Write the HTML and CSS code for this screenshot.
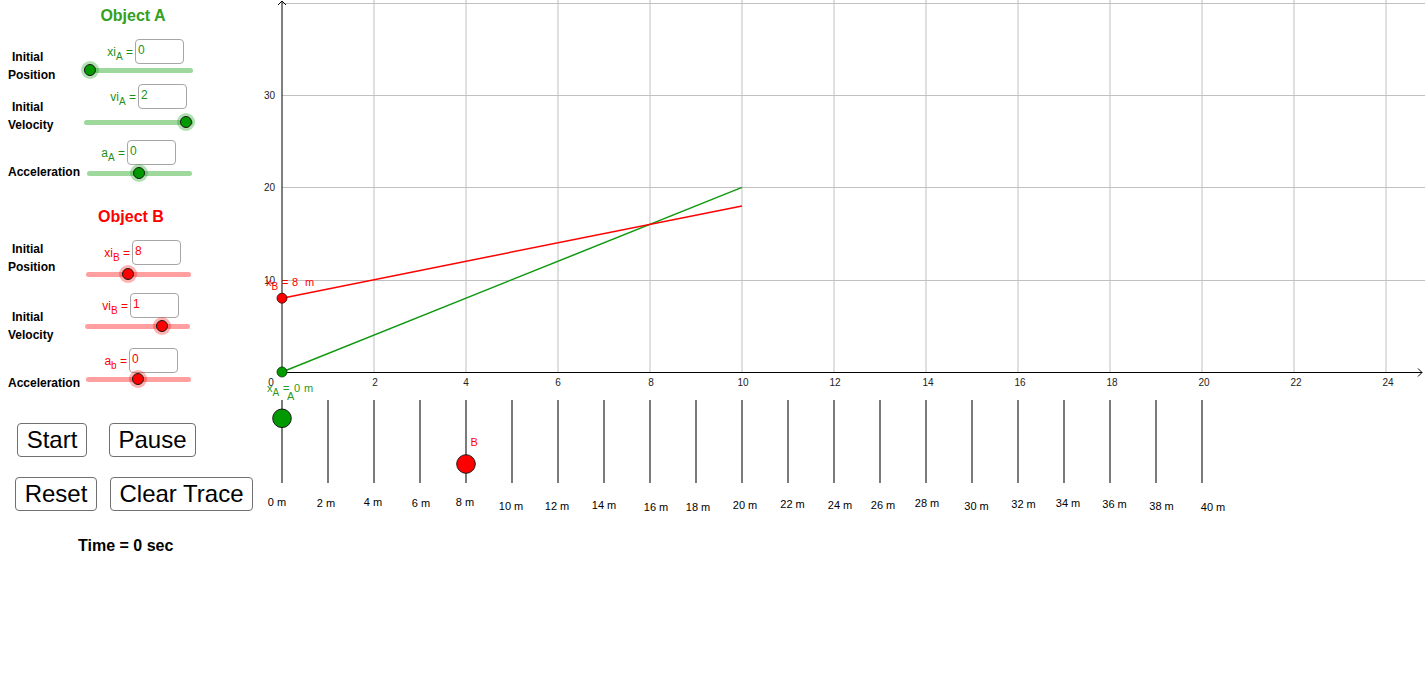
FILE: index.html
```html
<!DOCTYPE html>
<html>
<head>
<meta charset="utf-8">
<title>Motion</title>
<link rel="stylesheet" href="styles.css">
</head>
<body>
<div class="app">
  <div class="panel">
    <div class="title green t-a">Object A</div>

    <div class="row r-a1">
      <div class="rlabel"><span class="l1">Initial</span><span>Position</span></div>
      <div class="ctrl">
        <div class="field"><span class="var green">xi<sub>A</sub> =</span><span class="box green">0</span></div>
        <div class="slider sl-green"><span class="knob" style="left:6px"></span></div>
      </div>
    </div>

    <div class="row r-a2">
      <div class="rlabel"><span class="l1">Initial</span><span>Velocity</span></div>
      <div class="ctrl">
        <div class="field"><span class="var green">vi<sub>A</sub> =</span><span class="box green">2</span></div>
        <div class="slider sl-green"><span class="knob" style="left:102px"></span></div>
      </div>
    </div>

    <div class="row r-a3">
      <div class="rlabel"><span>Acceleration</span></div>
      <div class="ctrl">
        <div class="field"><span class="var green">a<sub>A</sub> =</span><span class="box green">0</span></div>
        <div class="slider sl-green"><span class="knob" style="left:52px"></span></div>
      </div>
    </div>

    <div class="title red t-b">Object B</div>

    <div class="row r-b1">
      <div class="rlabel"><span class="l1">Initial</span><span>Position</span></div>
      <div class="ctrl">
        <div class="field"><span class="var red">xi<sub>B</sub> =</span><span class="box red">8</span></div>
        <div class="slider sl-red"><span class="knob" style="left:42px"></span></div>
      </div>
    </div>

    <div class="row r-b2">
      <div class="rlabel"><span class="l1">Initial</span><span>Velocity</span></div>
      <div class="ctrl">
        <div class="field"><span class="var red">vi<sub>B</sub> =</span><span class="box red">1</span></div>
        <div class="slider sl-red"><span class="knob" style="left:77px"></span></div>
      </div>
    </div>

    <div class="row r-b3">
      <div class="rlabel"><span>Acceleration</span></div>
      <div class="ctrl">
        <div class="field"><span class="var red">a<sub>b</sub> =</span><span class="box red">0</span></div>
        <div class="slider sl-red"><span class="knob" style="left:52px"></span></div>
      </div>
    </div>

    <div class="btn-row br-1">
      <button class="btn b-start">Start</button>
      <button class="btn b-pause">Pause</button>
    </div>
    <div class="btn-row br-2">
      <button class="btn b-reset">Reset</button>
      <button class="btn b-clear">Clear Trace</button>
    </div>
    <div class="time">Time = 0 sec</div>
  </div>

  <svg class="graph" width="1169" height="695" viewBox="256 0 1169 695" xmlns="http://www.w3.org/2000/svg">
    <g class="grid">
      <line x1="374" y1="0" x2="374" y2="372"/>
      <line x1="466" y1="0" x2="466" y2="372"/>
      <line x1="558" y1="0" x2="558" y2="372"/>
      <line x1="650" y1="0" x2="650" y2="372"/>
      <line x1="742" y1="0" x2="742" y2="372"/>
      <line x1="834" y1="0" x2="834" y2="372"/>
      <line x1="926" y1="0" x2="926" y2="372"/>
      <line x1="1018" y1="0" x2="1018" y2="372"/>
      <line x1="1110" y1="0" x2="1110" y2="372"/>
      <line x1="1202" y1="0" x2="1202" y2="372"/>
      <line x1="1294" y1="0" x2="1294" y2="372"/>
      <line x1="1386" y1="0" x2="1386" y2="372"/>
      <line x1="282" y1="280.5" x2="1425" y2="280.5"/>
      <line x1="282" y1="187.5" x2="1425" y2="187.5"/>
      <line x1="282" y1="95.5" x2="1425" y2="95.5"/>
      <line x1="282" y1="3.5" x2="1425" y2="3.5"/>
    </g>
    <g class="axes">
      <line x1="282" y1="372.5" x2="1422" y2="372.5"/>
      <line x1="282" y1="372.5" x2="282" y2="1"/>
      <polyline points="1418,368.5 1422,372.5 1418,376.5"/>
      <polyline points="278,5 282,1 286,5"/>
    </g>
    <g class="ticks">
      <text x="271" y="386">0</text>
      <text x="375" y="386">2</text>
      <text x="466" y="386">4</text>
      <text x="558" y="386">6</text>
      <text x="651" y="386">8</text>
      <text x="743" y="386">10</text>
      <text x="835" y="386">12</text>
      <text x="928" y="386">14</text>
      <text x="1020" y="386">16</text>
      <text x="1112" y="386">18</text>
      <text x="1204" y="386">20</text>
      <text x="1296" y="386">22</text>
      <text x="1388" y="386">24</text>
    </g>
    <g class="yticks">
      <text x="275" y="99">30</text>
      <text x="275" y="191">20</text>
      <text x="275" y="284">10</text>
    </g>

    <line class="l-green" x1="282" y1="372" x2="742" y2="187.4"/>
    <line class="l-red" x1="282" y1="298.2" x2="742" y2="205.9"/>

    <text class="lbl red-t" x="266" y="286">x<tspan class="sub" dy="3.5">B</tspan></text>
    <text class="lbl red-t" x="282" y="286">=</text>
    <text class="lbl red-t" x="292" y="286">8</text>
    <text class="lbl red-t" x="305" y="286">m</text>

    <circle class="pt-red" cx="282" cy="298.2" r="5"/>
    <circle class="pt-green" cx="282" cy="372" r="5"/>

    <text class="lbl green-t" x="267" y="392">x<tspan class="sub" dy="3.5">A</tspan></text>
    <text class="lbl green-t" x="283" y="392">=</text>
    <text class="lbl green-t" x="294" y="392">0</text>
    <text class="lbl green-t" x="304" y="392">m</text>
    <text class="lbl green-t" x="287" y="399.5">A</text>

    <g class="track">
      <line x1="282" y1="400" x2="282" y2="483"/>
      <line x1="328" y1="400" x2="328" y2="483"/>
      <line x1="374" y1="400" x2="374" y2="483"/>
      <line x1="420" y1="400" x2="420" y2="483"/>
      <line x1="466" y1="400" x2="466" y2="483"/>
      <line x1="512" y1="400" x2="512" y2="483"/>
      <line x1="558" y1="400" x2="558" y2="483"/>
      <line x1="604" y1="400" x2="604" y2="483"/>
      <line x1="650" y1="400" x2="650" y2="483"/>
      <line x1="696" y1="400" x2="696" y2="483"/>
      <line x1="742" y1="400" x2="742" y2="483"/>
      <line x1="788" y1="400" x2="788" y2="483"/>
      <line x1="834" y1="400" x2="834" y2="483"/>
      <line x1="880" y1="400" x2="880" y2="483"/>
      <line x1="926" y1="400" x2="926" y2="483"/>
      <line x1="972" y1="400" x2="972" y2="483"/>
      <line x1="1018" y1="400" x2="1018" y2="483"/>
      <line x1="1064" y1="400" x2="1064" y2="483"/>
      <line x1="1110" y1="400" x2="1110" y2="483"/>
      <line x1="1156" y1="400" x2="1156" y2="483"/>
      <line x1="1202" y1="400" x2="1202" y2="483"/>
    </g>
    <g class="mlabels">
      <text x="277" y="505.5">0 m</text>
      <text x="326" y="507">2 m</text>
      <text x="373" y="506">4 m</text>
      <text x="421" y="507">6 m</text>
      <text x="465" y="506">8 m</text>
      <text x="511" y="509.5">10 m</text>
      <text x="557" y="509.5">12 m</text>
      <text x="604" y="509">14 m</text>
      <text x="656" y="510.5">16 m</text>
      <text x="698" y="510.5">18 m</text>
      <text x="745" y="509">20 m</text>
      <text x="792.5" y="508">22 m</text>
      <text x="840" y="508.5">24 m</text>
      <text x="883" y="508.5">26 m</text>
      <text x="927" y="507">28 m</text>
      <text x="976.5" y="509.5">30 m</text>
      <text x="1023.5" y="508">32 m</text>
      <text x="1068" y="506.5">34 m</text>
      <text x="1114.5" y="508">36 m</text>
      <text x="1161.5" y="510">38 m</text>
      <text x="1213" y="510.5">40 m</text>
    </g>

    <circle class="ball-green" cx="282" cy="418.3" r="9.3"/>
    <circle class="ball-red" cx="466" cy="464" r="9.3"/>
    <text class="lbl red-t" x="470.5" y="446">B</text>
  </svg>
</div>
</body>
</html>
```

FILE: styles.css
```css
html, body {
  margin: 0;
  padding: 0;
  background: #ffffff;
}

body {
  font-family: "Liberation Sans", Arial, sans-serif;
  color: #000;
}

.app {
  display: flex;
  width: 1425px;
  height: 695px;
  overflow: hidden;
}

.panel {
  width: 256px;
  flex: none;
}

.graph {
  flex: none;
  display: block;
}

.green { color: #1f8f1a; }
.red { color: #ff0000; }

.title {
  height: 32px;
  line-height: 32px;
  text-align: center;
  font-weight: bold;
  font-size: 16px;
}

.title.green { color: #33a01f; }

.t-a { padding-left: 10px; }
.t-b { padding-top: 22px; padding-left: 6px; }

.row {
  display: flex;
  align-items: flex-start;
}

.rlabel {
  width: 80px;
  flex: none;
  box-sizing: border-box;
  padding-left: 8px;
  display: flex;
  flex-direction: column;
  font-weight: bold;
  font-size: 12px;
  line-height: 18px;
  white-space: nowrap;
}

.rlabel .l1 { padding-left: 4px; }

.ctrl {
  display: flex;
  flex-direction: column;
  align-items: flex-start;
}

.field {
  display: flex;
  align-items: center;
}

.var {
  width: 42px;
  box-sizing: border-box;
  padding-right: 2px;
  text-align: right;
  font-size: 12px;
  white-space: nowrap;
}

.var sub {
  font-size: 10px;
  vertical-align: -4px;
  line-height: 0;
}

.box {
  width: 49px;
  height: 25px;
  box-sizing: border-box;
  border: 1px solid #a6a6a6;
  border-radius: 4px;
  font-size: 12px;
  line-height: 21px;
  padding-left: 2px;
  background: #fff;
}

.slider {
  position: relative;
  height: 12px;
}

.slider::before {
  content: "";
  position: absolute;
  left: 0;
  right: 0;
  top: 3.5px;
  height: 5px;
  border-radius: 3px;
}

.sl-green::before { background: #9fd89c; }
.sl-red::before { background: #ff9f9f; }

.knob {
  position: absolute;
  top: 0;
  width: 12px;
  height: 12px;
  margin-left: -6px;
  box-sizing: border-box;
  border-radius: 50%;
  border: 1px solid #1a1a1a;
}

.sl-green .knob {
  background: #009900;
  box-shadow: 0 0 0 3px rgba(0, 153, 0, 0.3);
}

.sl-red .knob {
  background: #ff0000;
  box-shadow: 0 0 0 3px rgba(255, 0, 0, 0.3);
}

/* rows */
.r-a1 { height: 44px; }
.r-a1 .rlabel { padding-top: 16px; }
.r-a1 .field { margin-top: 7px; margin-left: 13px; }
.r-a1 .slider { margin-top: 0; margin-left: 4px; width: 109px; }

.r-a2 { height: 52px; }
.r-a2 .rlabel { padding-top: 22px; }
.r-a2 .field { margin-top: 8px; margin-left: 16px; }
.r-a2 .slider { margin-top: 7px; margin-left: 4px; width: 109px; }

.r-a3 { height: 51px; }
.r-a3 .rlabel { padding-top: 35px; }
.r-a3 .field { margin-top: 12px; margin-left: 5px; }
.r-a3 .slider { margin-top: 2px; margin-left: 7px; width: 105px; }

.r-b1 { height: 47px; }
.r-b1 .rlabel { padding-top: 7px; }
.r-b1 .field { margin-top: 7px; margin-left: 10px; }
.r-b1 .slider { margin-top: 3px; margin-left: 6px; width: 105px; }

.r-b2 { height: 52px; }
.r-b2 .rlabel { padding-top: 28px; }
.r-b2 .field { margin-top: 13px; margin-left: 8px; }
.r-b2 .slider { margin-top: 2px; margin-left: 5px; width: 105px; }

.r-b3 { height: 53px; }
.r-b3 .rlabel { padding-top: 42px; }
.r-b3 .field { margin-top: 16px; margin-left: 7px; }
.r-b3 .slider { margin-top: 0; margin-left: 6px; width: 105px; }

/* buttons */
.btn-row {
  display: flex;
  height: 34px;
}

.br-1 { margin-top: 38px; }
.br-2 { margin-top: 20px; }

.btn {
  box-sizing: border-box;
  height: 34px;
  margin: 0;
  padding: 0;
  border: 1px solid #707070;
  border-radius: 4px;
  background: #ffffff;
  font-family: "Liberation Sans", Arial, sans-serif;
  font-size: 24px;
  line-height: 32px;
  color: #000;
  text-align: center;
  white-space: nowrap;
}

.b-start { margin-left: 17px; width: 70px; }
.b-pause { margin-left: 22px; width: 87px; }
.b-reset { margin-left: 15px; width: 82px; }
.b-clear { margin-left: 13px; width: 143px; }

.time {
  margin-top: 25px;
  margin-left: 78px;
  font-weight: bold;
  font-size: 16px;
  line-height: 20px;
  white-space: nowrap;
}

/* graph */
.grid line {
  stroke: #c0c0c0;
  stroke-width: 1;
}

.axes line,
.axes polyline {
  stroke: #000;
  stroke-width: 1;
  fill: none;
}

.ticks text,
.yticks text {
  font-family: "Liberation Sans", Arial, sans-serif;
  font-size: 10px;
  fill: #222;
}

.ticks text { text-anchor: middle; }
.yticks text { text-anchor: end; }

.l-green { stroke: #119911; stroke-width: 1.5; }
.l-red { stroke: #ff0000; stroke-width: 1.5; }

.lbl {
  font-family: "Liberation Sans", Arial, sans-serif;
  font-size: 11px;
}

.lbl .sub { font-size: 10px; }

.red-t { fill: #ff0000; }
.green-t { fill: #2a9a1a; }

.pt-red { fill: #ff0000; stroke: #3a0000; stroke-width: 0.8; }
.pt-green { fill: #009900; stroke: #003300; stroke-width: 0.8; }

.track line {
  stroke: #333;
  stroke-width: 1.3;
}

.mlabels text {
  font-family: "Liberation Sans", Arial, sans-serif;
  font-size: 11px;
  fill: #000;
  text-anchor: middle;
}

.ball-green { fill: #009900; stroke: #1a1a1a; stroke-width: 1; }
.ball-red { fill: #ff0000; stroke: #1a1a1a; stroke-width: 1; }
```
